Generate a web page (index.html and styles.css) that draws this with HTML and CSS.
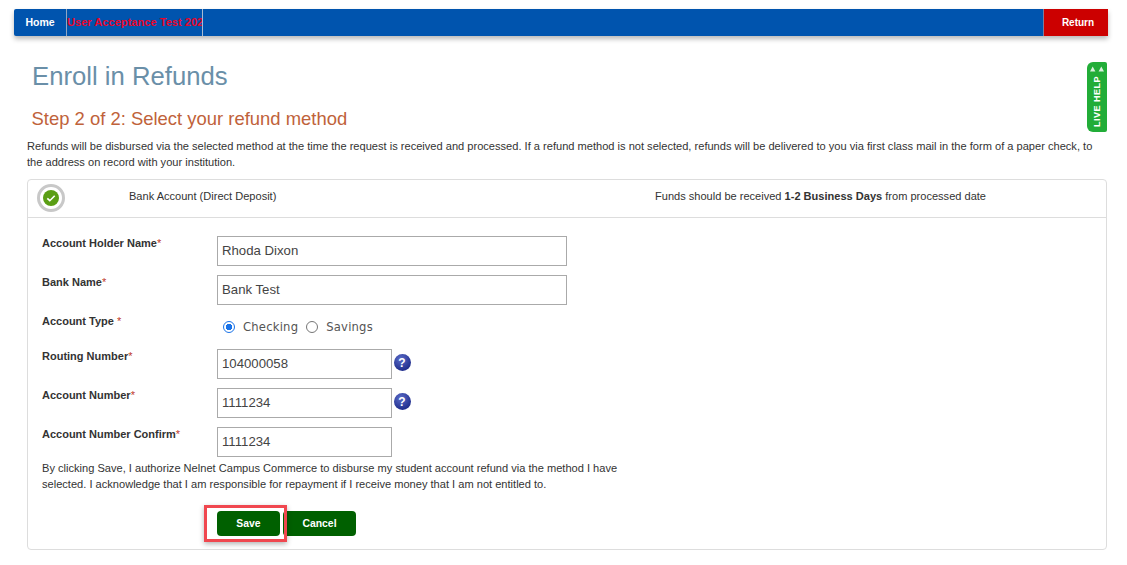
FILE: index.html
```html
<!DOCTYPE html>
<html lang="en">
<head>
<meta charset="utf-8">
<title>Enroll in Refunds</title>
<link rel="stylesheet" href="styles.css">
</head>
<body>
<nav class="topbar">
  <a class="nav-home">Home</a>
  <span class="nav-env">User Acceptance Test 202</span>
  <a class="nav-return">Return</a>
</nav>
<a class="live-help">
  <span class="live-arrows"><svg viewBox="0 0 14 6" width="14" height="6"><path d="M0 5.5L2.7 .5 5.4 5.5zM8.6 5.5L11.3 .5 14 5.5z" fill="#d8f0dc"/></svg></span>
  <span class="live-text">LIVE HELP</span>
</a>
<main class="page">
  <h1 class="title">Enroll in Refunds</h1>
  <h2 class="step">Step 2 of 2: Select your refund method</h2>
  <p class="intro">Refunds will be disbursed via the selected method at the time the request is received and processed. If a refund method is not selected, refunds will be delivered to you via first class mail in the form of a paper check, to the address on record with your institution.</p>
  <section class="card">
    <header class="card-head">
      <span class="check-ring">
        <svg class="check-icon" viewBox="0 0 16 16" width="16" height="16"><circle cx="8" cy="8" r="8" fill="#5a9e14"/><path d="M4.3 8.3l2.5 2.4 4.9-5" fill="none" stroke="#fff" stroke-width="1.6"/></svg>
      </span>
      <span class="method">Bank Account (Direct Deposit)</span>
      <span class="funds">Funds should be received <b>1-2 Business Days</b> from processed date</span>
    </header>
    <form class="form">
      <div class="row"><label class="lbl">Account Holder Name<i>*</i></label><input class="field wide" value="Rhoda Dixon"></div>
      <div class="row"><label class="lbl">Bank Name<i>*</i></label><input class="field wide" value="Bank Test"></div>
      <div class="row row-radio"><label class="lbl">Account Type <i>*</i></label>
        <div class="radios">
          <span class="radio on"></span><span class="radio-text">Checking</span>
          <span class="radio"></span><span class="radio-text">Savings</span>
        </div>
      </div>
      <div class="row"><label class="lbl">Routing Number<i>*</i></label><input class="field short" value="104000058"><span class="help">?</span></div>
      <div class="row"><label class="lbl">Account Number<i>*</i></label><input class="field short" value="1111234"><span class="help">?</span></div>
      <div class="row row-last"><label class="lbl">Account Number Confirm<i>*</i></label><input class="field short" value="1111234"></div>
      <p class="auth">By clicking Save, I authorize Nelnet Campus Commerce to disburse my student account refund via the method I have selected. I acknowledge that I am responsible for repayment if I receive money that I am not entitled to.</p>
      <div class="actions">
        <button type="button" class="btn">Save</button>
        <button type="button" class="btn btn-cancel">Cancel</button>
        <span class="highlight"></span>
      </div>
    </form>
  </section>
</main>
</body>
</html>
```
FILE: styles.css
```css
* { box-sizing: border-box; }
html, body { margin: 0; padding: 0; background: #fff; }
body { font-family: "Liberation Sans", Arial, sans-serif; color: #333; height: 565px; overflow: hidden; position: relative; }

.topbar { display: flex; align-items: stretch; height: 27px; margin: 9px 19px 0 14px; background: #0054ae; border-radius: 2px 0 0 2px; box-shadow: 0 3px 5px rgba(0,0,0,.28); font-size: 10.5px; font-weight: bold; line-height: 27px; }
.nav-home { width: 53px; padding-left: 11.5px; color: #fff; border-right: 1px solid #8fa6c4; }
.nav-env { width: 136px; color: #e8062c; border-right: 1px solid #a9bbd2; white-space: nowrap; overflow: hidden; font-size: 11.1px; }
.nav-return { margin-left: auto; width: 65px; padding-left: 4px; text-align: center; font-size: 10px; color: #fff; background: #cc0000; border-left: 1px solid #7d7d9a; }

.live-help { position: absolute; left: 1087px; top: 62px; width: 20px; height: 70px; display: flex; flex-direction: column; align-items: center; padding-top: 4px; background: #22ad38; border-radius: 6px 2px 2px 6px; color: #fff; }
.live-arrows { display: block; height: 6px; line-height: 0; }
.live-text { margin-top: 4px; writing-mode: vertical-rl; transform: rotate(180deg); font-size: 9px; line-height: 10px; font-weight: bold; letter-spacing: .5px; white-space: nowrap; }

.page { padding: 0 20px 0 27px; }
.title { margin: 25px 0 0 5px; font-size: 25.7px; line-height: 30px; font-weight: normal; color: #6a8fa8; }
.step { margin: 17px 0 0 4.5px; font-size: 18.45px; line-height: 22px; font-weight: normal; color: #c0623a; }
.intro { max-width: 1075px; margin: 8px 0 0; font-size: 11.08px; line-height: 16px; color: #333; }

.card { margin-top: 9px; height: 371px; border: 1px solid #ddd; border-radius: 4px; }
.card-head { display: flex; align-items: center; height: 38px; padding-bottom: 6px; border-bottom: 1px solid #ddd; font-size: 11.05px; }
.check-ring { display: flex; align-items: center; justify-content: center; width: 28px; height: 28px; margin: 5px 0 0 9px; border: 3px solid #c8c8c8; border-radius: 50%; }
.check-icon { display: block; }
.method { margin-left: 64px; width: 526px; }
.funds { white-space: nowrap; }

.form { padding: 18px 0 0 14px; font-size: 11px; }
.row { display: flex; align-items: flex-start; height: 30px; margin-bottom: 9px; }
.row-radio { height: 28px; margin-bottom: 7px; }
.row-last { margin-bottom: 3px; }
.lbl { width: 175px; padding-top: 1px; font-weight: bold; line-height: 12px; color: #333; white-space: nowrap; }
.lbl i { color: #c0392b; font-style: normal; font-weight: normal; }
.field { height: 30px; padding: 0 5px 1px 4px; border: 1px solid #aaa; border-radius: 0; font-family: "Liberation Sans", Arial, sans-serif; font-size: 13.2px; color: #444; background: #fff; outline: none; }
.wide { width: 349.5px; }
.short { width: 175px; }
.help { display: flex; align-items: center; justify-content: center; width: 17px; height: 17px; margin: 5px 0 0 1.5px; border-radius: 50%; background: radial-gradient(circle at 40% 30%, #5b6cc8, #1f2d8c 75%); color: #fff; font-size: 12px; font-weight: bold; }
.radios { display: flex; align-items: center; height: 26px; padding: 0 0 0 6px; font-family: "DejaVu Sans", sans-serif; font-size: 11.6px; color: #555; }
.radio { width: 12px; height: 12px; border: 1px solid #767676; border-radius: 50%; background: #fff; }
.radio.on { border: 1.5px solid #1a73e8; background: radial-gradient(circle, #1a73e8 0 3px, #fff 3.5px); }
.radio-text { margin: 0 8px; letter-spacing: .2px; }
.auth { width: 590px; margin: 0; font-size: 11.08px; line-height: 16px; color: #333; }
.actions { position: relative; display: flex; gap: 3px; margin: 19px 0 0 175px; }
.btn { width: 63px; height: 25px; padding: 0; border: 0; border-radius: 4px; background: #006000; color: #fff; font-family: "Liberation Sans", Arial, sans-serif; font-size: 10.4px; font-weight: bold; }
.btn-cancel { width: 73px; }
.highlight { position: absolute; left: -13px; top: -6px; width: 83px; height: 37px; border: 3px solid #f0474f; box-shadow: 0 2px 5px rgba(0,0,0,.3); }
```
